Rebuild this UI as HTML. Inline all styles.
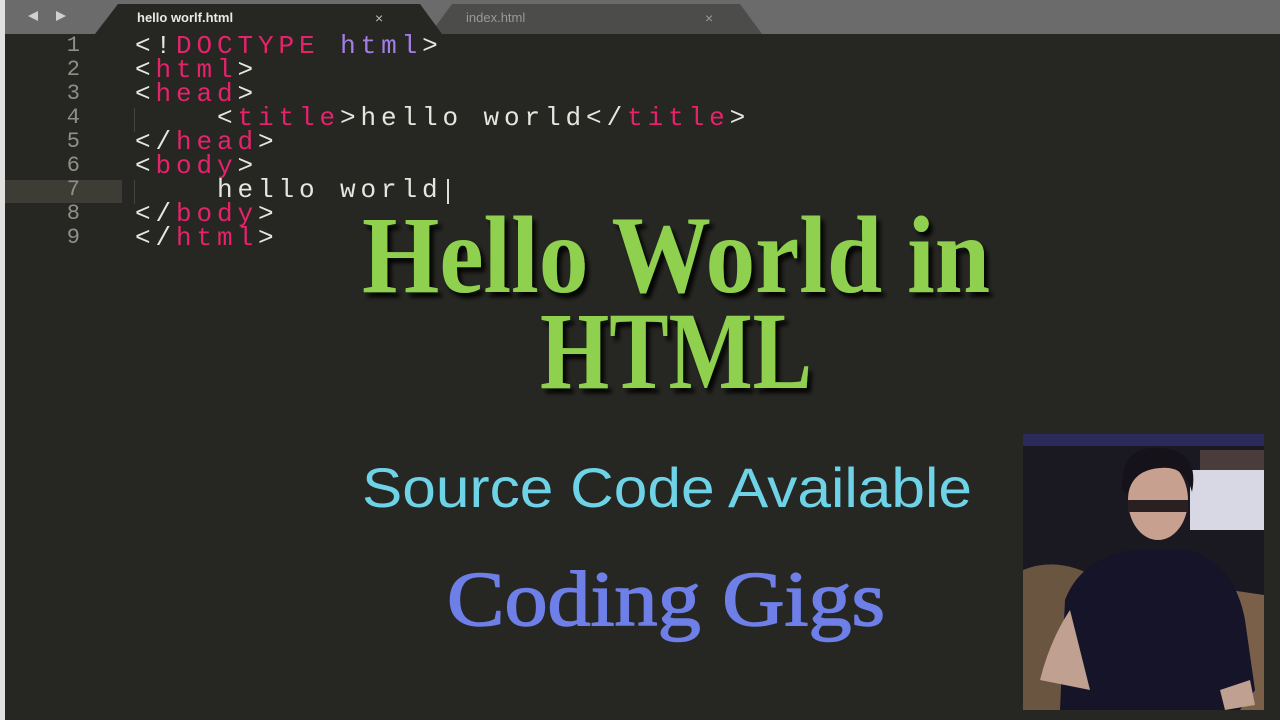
<!DOCTYPE html>
<html><head><style>
body{margin:0;width:1280px;height:720px;overflow:hidden;background:#262622;position:relative;font-family:"Liberation Sans",sans-serif}
.code{position:absolute;left:0;top:0;font-family:"Liberation Mono",monospace;font-size:26px;letter-spacing:4.9px;color:#e6e6e0;line-height:24px}
.ln{position:absolute;width:80px;text-align:right;color:#8f908a;letter-spacing:0;font-size:22px}
.l{position:absolute;left:135px;white-space:pre}
.p{color:#e5236c}.v{color:#a47fe6}
</style></head><body>
<div style="position:absolute;left:0;top:0;width:5px;height:720px;background:#e0e0e0"></div>
<svg style="position:absolute;left:0;top:0" width="1280" height="36">
<rect x="5" y="0" width="1275" height="34" fill="#6b6b6b"/>
<polygon points="430,34 452,4 740,4 762,34" fill="#4c4c4a"/>
<polygon points="95,34 118,4 420,4 442,34" fill="#262622"/>
<polygon points="28,16 38,11 38,21" fill="#cfcfcf"/><polygon points="56,11 66,16 56,21" fill="#cfcfcf"/>
<text x="137" y="22" font-family="Liberation Sans" font-size="13" font-weight="bold" fill="#e8e8e8">hello worlf.html</text>
<text x="375" y="23" font-family="Liberation Sans" font-size="14" fill="#bbb">×</text>
<text x="466" y="22" font-family="Liberation Sans" font-size="13" fill="#999">index.html</text>
<text x="705" y="23" font-family="Liberation Sans" font-size="14" fill="#999">×</text>
</svg>
<div style="position:absolute;left:5px;top:180px;width:117px;height:23px;background:#3d3d36"></div>
<div style="position:absolute;left:134px;top:108px;width:1px;height:24px;background:#444"></div>
<div style="position:absolute;left:134px;top:180px;width:1px;height:24px;background:#444"></div>
<div class="code">
<div class="ln" style="top:34px">1</div><div class="ln" style="top:58px">2</div><div class="ln" style="top:82px">3</div><div class="ln" style="top:106px">4</div><div class="ln" style="top:130px">5</div><div class="ln" style="top:154px">6</div><div class="ln" style="top:178px">7</div><div class="ln" style="top:202px">8</div><div class="ln" style="top:226px">9</div>
<div class="l" style="top:34px">&lt;!<span class="p">DOCTYPE</span> <span class="v">html</span>&gt;</div>
<div class="l" style="top:58px">&lt;<span class="p">html</span>&gt;</div>
<div class="l" style="top:82px">&lt;<span class="p">head</span>&gt;</div>
<div class="l" style="top:106px">    &lt;<span class="p">title</span>&gt;hello world&lt;/<span class="p">title</span>&gt;</div>
<div class="l" style="top:130px">&lt;/<span class="p">head</span>&gt;</div>
<div class="l" style="top:154px">&lt;<span class="p">body</span>&gt;</div>
<div class="l" style="top:178px">    hello world</div>
<div class="l" style="top:202px">&lt;/<span class="p">body</span>&gt;</div>
<div class="l" style="top:226px">&lt;/<span class="p">html</span>&gt;</div>
</div>
<div style="position:absolute;left:447px;top:179px;width:2px;height:25px;background:#ddd"></div>
<svg style="position:absolute;left:0;top:0" width="1280" height="720">
<defs><filter id="s"><feDropShadow dx="4" dy="5" stdDeviation="2" flood-color="#000" flood-opacity="0.9"/></filter></defs>
<g filter="url(#s)" font-family="Liberation Serif" font-weight="bold" fill="#8fd150" font-size="110">
<text x="362" y="292" textLength="628" lengthAdjust="spacingAndGlyphs">Hello World in</text>
<text x="540" y="388" textLength="272" lengthAdjust="spacingAndGlyphs">HTML</text>
</g>
<text x="362" y="507" font-family="Liberation Sans" font-size="56" fill="#6fd3e8" textLength="610" lengthAdjust="spacingAndGlyphs">Source Code Available</text>
<text x="447" y="625" font-family="Liberation Serif" font-size="78" fill="#6e7fe8" stroke="#6e7fe8" stroke-width="1.5" textLength="438" lengthAdjust="spacingAndGlyphs">Coding Gigs</text>
<g>
<rect x="1023" y="434" width="241" height="276" fill="#1a1820"/>
<rect x="1023" y="434" width="241" height="12" fill="#2c2a5a"/>
<rect x="1190" y="470" width="74" height="60" fill="#d8d8e4"/>
<rect x="1200" y="450" width="64" height="20" fill="#4a3c3a"/>
<path d="M1023 570 Q1060 555 1100 580 L1100 710 L1023 710Z" fill="#6a5540"/>
<path d="M1230 590 L1264 595 L1264 710 L1230 710Z" fill="#7a6048"/>
<ellipse cx="1158" cy="500" rx="30" ry="40" fill="#c8a090"/>
<path d="M1122 490 Q1120 445 1160 448 Q1200 450 1192 492 Q1185 465 1160 468 Q1132 470 1128 495Z" fill="#15121a"/>
<rect x="1128" y="500" width="60" height="12" fill="#2a2022"/>
<path d="M1060 710 L1065 600 Q1080 560 1130 550 L1190 550 Q1235 565 1245 620 L1255 690 L1240 710Z" fill="#151428"/>
<path d="M1040 680 Q1050 640 1070 610 L1090 690Z" fill="#c0a090"/>
<path d="M1220 690 L1250 680 L1255 705 L1225 710Z" fill="#c0a090"/>
</g>
</svg>
</body></html>
